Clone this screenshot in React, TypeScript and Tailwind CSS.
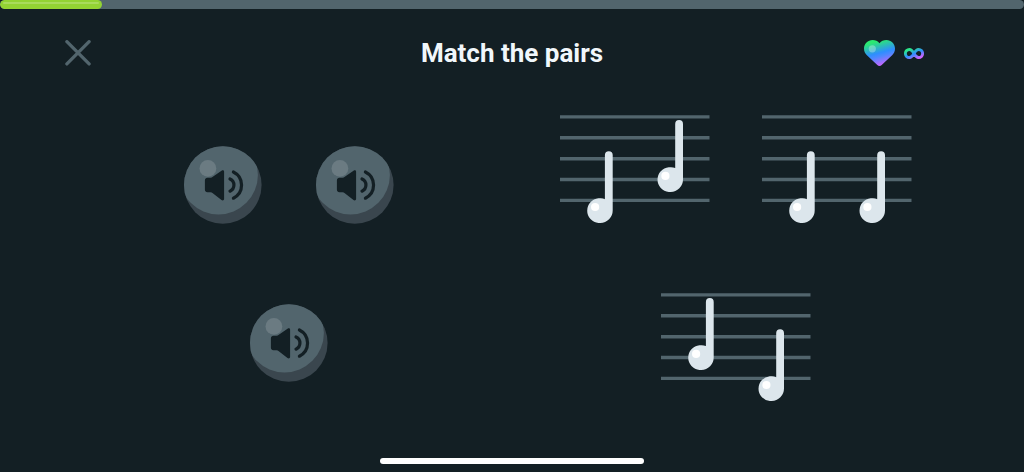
import { useState } from 'react';

type Pitch = 'low' | 'high';

interface PairCard {
  id: string;
  label: string;
  notes?: [Pitch, Pitch];
}

const soundRows: PairCard[][] = [
  [
    { id: 'sound-1', label: 'Play sound 1' },
    { id: 'sound-2', label: 'Play sound 2' },
  ],
  [{ id: 'sound-3', label: 'Play sound 3' }],
];

const staffRows: PairCard[][] = [
  [
    { id: 'staff-1', label: 'Low note, high note', notes: ['low', 'high'] },
    { id: 'staff-2', label: 'Low note, low note', notes: ['low', 'low'] },
  ],
  [{ id: 'staff-3', label: 'High note, low note', notes: ['high', 'low'] }],
];

const STAFF_LINES = [1.9, 22.8, 43.7, 64.5, 85.4];
const NOTE_X = [26.3, 96.6];
const NOTE_Y: Record<Pitch, number> = { low: 83.3, high: 52.2 };

const ProgressBar = ({ value }: { value: number }) => (
  <div
    role="progressbar"
    aria-label="Lesson progress"
    aria-valuenow={value}
    aria-valuemin={0}
    aria-valuemax={100}
    className="h-[9px] w-full overflow-hidden rounded-full bg-[#52656d]"
  >
    <div className="h-full rounded-full bg-[#93d333] px-[3px] pt-[2px]" style={{ width: `${value}%` }}>
      <div className="h-[2px] rounded-full bg-[#a9dc5c]" />
    </div>
  </div>
);

const CloseIcon = () => (
  <svg width="26" height="26" viewBox="0 0 26 26" fill="none" aria-hidden="true">
    <path d="M1.9 1.7L24.1 23.9M24.1 1.7L1.9 23.9" stroke="#52656d" strokeWidth="3.3" strokeLinecap="round" />
  </svg>
);

const HeartIcon = () => (
  <svg width="31" height="26" viewBox="0 0 31 26" aria-hidden="true">
    <defs>
      <linearGradient id="heartFill" gradientUnits="userSpaceOnUse" x1="10" y1="1" x2="17" y2="26">
        <stop offset="0.05" stopColor="#2be872" />
        <stop offset="0.5" stopColor="#2e8eff" />
        <stop offset="0.64" stopColor="#4f88ff" />
        <stop offset="1" stopColor="#cf62ff" />
      </linearGradient>
    </defs>
    <path
      d="M15.5 3.2C13.8 1.2 11.4 0 8.6 0C3.8 0 0 3.8 0 8.5C0 11.2 1 13.3 2.9 15.2L13.3 25C14.6 26.2 16.4 26.2 17.7 25L28.1 15.2C30 13.3 31 11.2 31 8.5C31 3.8 27.2 0 22.4 0C19.6 0 17.2 1.2 15.5 3.2Z"
      fill="url(#heartFill)"
    />
    <circle cx="8.3" cy="8.8" r="3.6" fill="#fff" fillOpacity="0.3" />
  </svg>
);

const InfinityIcon = () => (
  <svg width="20" height="11" viewBox="0 0 20 11" fill="none" role="img" aria-label="Unlimited hearts">
    <defs>
      <linearGradient id="infinityStroke" gradientUnits="userSpaceOnUse" x1="7" y1="0" x2="12" y2="12">
        <stop offset="0.05" stopColor="#2be88a" />
        <stop offset="0.5" stopColor="#2e8eff" />
        <stop offset="0.95" stopColor="#d362ff" />
      </linearGradient>
    </defs>
    <path
      d="M10 5.5C8.7 3.1 7.4 1.5 5.4 1.5C3.1 1.5 1.4 3.2 1.4 5.5C1.4 7.8 3.1 9.5 5.4 9.5C7.4 9.5 8.7 7.9 10 5.5C11.3 3.1 12.6 1.5 14.6 1.5C16.9 1.5 18.6 3.2 18.6 5.5C18.6 7.8 16.9 9.5 14.6 9.5C12.6 9.5 11.3 7.9 10 5.5Z"
      stroke="url(#infinityStroke)"
      strokeWidth="2.9"
    />
  </svg>
);

const SpeakerBubble = ({ id }: { id: string }) => (
  <svg width="78" height="78" viewBox="0 0 78 78" aria-hidden="true">
    <defs>
      <clipPath id={`${id}-clip`}>
        <circle cx="38.8" cy="39" r="38.8" />
      </clipPath>
    </defs>
    <circle cx="38.8" cy="39" r="38.8" fill="#3a464e" />
    <circle cx="34.5" cy="29" r="39.4" fill="#52656d" clipPath={`url(#${id}-clip)`} />
    <circle cx="23.9" cy="22.4" r="8.4" fill="#6b7b82" />
    <path
      d="M20.9 34.2C20.9 32.7 22 31.7 23.4 31.7H26.5C27.4 31.7 28.1 31.4 28.8 30.8L37.5 24.7C38.7 23.9 40.1 24.4 40.1 25.7V53C40.1 54.3 38.7 54.8 37.5 54L28.8 47.2C28.1 46.6 27.4 46.3 26.5 46.3H23.4C22 46.3 20.9 45.3 20.9 43.8Z"
      fill="#131f24"
    />
    <path
      d="M46 33A6.7 6.7 0 0 1 46 45.2M49.4 26A14.6 14.6 0 0 1 49.4 52.2"
      fill="none"
      stroke="#131f24"
      strokeWidth="3.2"
      strokeLinecap="round"
    />
  </svg>
);

const Note = ({ x, y }: { x: number; y: number }) => (
  <g transform={`translate(${x} ${y})`}>
    <path
      d="M18.6 -43.2A3.9 3.9 0 0 1 26.4 -43.2V12.3A12.4 12.4 0 0 1 14 24.7H12.2A12.4 12.4 0 0 1 12.2 0H14.3C15.8 0 17.2 0.3 18.6 0.9Z"
      fill="#dce6ec"
    />
    <circle cx="8.8" cy="8.7" r="4.1" fill="#fff" />
  </g>
);

const Staff = ({ notes }: { notes: [Pitch, Pitch] }) => (
  <svg width="150" height="120" viewBox="0 0 150 120" aria-hidden="true">
    {STAFF_LINES.map((y) => (
      <line key={y} x1="0" x2="149.5" y1={y} y2={y} stroke="#52656d" strokeWidth="3.4" />
    ))}
    {notes.map((pitch, i) => (
      <Note key={i} x={NOTE_X[i]} y={NOTE_Y[pitch]} />
    ))}
  </svg>
);

export default function App() {
  const [selected, setSelected] = useState<string | null>(null);

  const renderCard = (card: PairCard) => (
    <button
      key={card.id}
      type="button"
      aria-label={card.label}
      aria-pressed={selected === card.id}
      onClick={() => setSelected(card.id)}
      className="cursor-pointer rounded-full"
    >
      {card.notes ? <Staff notes={card.notes} /> : <SpeakerBubble id={card.id} />}
    </button>
  );

  return (
    <div className="flex min-h-screen flex-col bg-[#131f24] font-['Roboto','Noto_Sans',sans-serif] text-[#f1f7fb]">
      <ProgressBar value={10} />

      <header className="grid h-[88px] grid-cols-[1fr_auto_1fr] items-center px-[65px]">
        <button type="button" aria-label="Close" className="cursor-pointer justify-self-start">
          <CloseIcon />
        </button>
        <h1 className="text-[26px] leading-8 font-bold">Match the pairs</h1>
        <div className="flex items-center gap-[9px] justify-self-end pr-[35px]">
          <HeartIcon />
          <InfinityIcon />
        </div>
      </header>

      <main className="grid flex-1 grid-cols-2 items-center px-[65px]">
        <div className="flex flex-col gap-20">
          {soundRows.map((row, i) => (
            <div key={i} className="flex justify-center gap-[54px]">
              {row.map(renderCard)}
            </div>
          ))}
        </div>
        <div className="flex flex-col gap-[58px]">
          {staffRows.map((row, i) => (
            <div key={i} className="flex justify-center gap-[52px]">
              {row.map(renderCard)}
            </div>
          ))}
        </div>
      </main>

      <footer className="flex justify-center pt-[27px] pb-2">
        <div className="h-[6px] w-[264px] rounded-full bg-white" />
      </footer>
    </div>
  );
}
